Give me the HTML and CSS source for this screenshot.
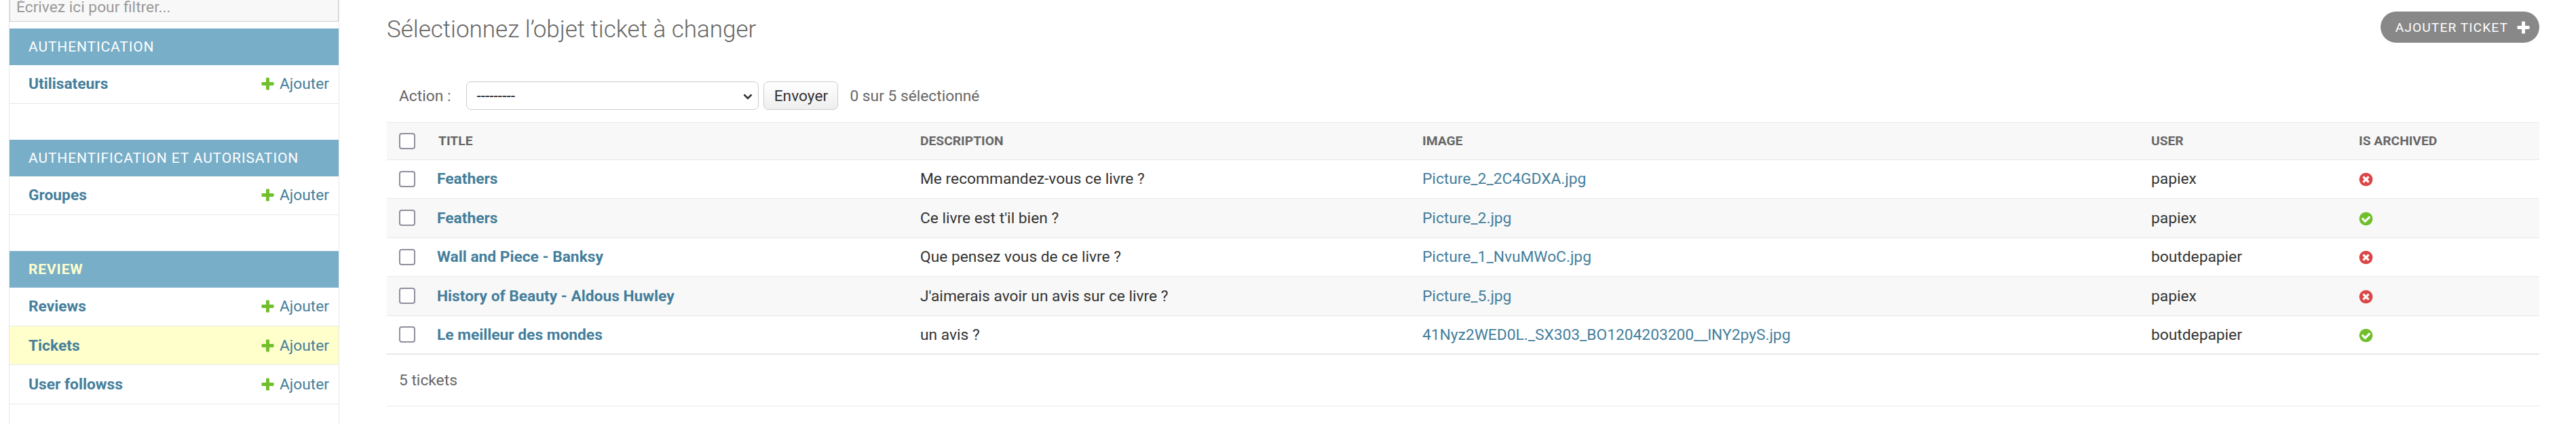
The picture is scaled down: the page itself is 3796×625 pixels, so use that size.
FILE: index.html
```html
<!DOCTYPE html>
<html lang="fr">
<head>
<meta charset="utf-8">
<title>Sélectionnez l’objet ticket à changer</title>
<link rel="stylesheet" href="styles.css">
</head>
<body>
<svg class="defs" width="0" height="0" aria-hidden="true">
  <symbol id="i-plus" viewBox="0 0 1792 1792"><path d="M1600 796v192q0 40-28 68t-68 28h-416v416q0 40-28 68t-68 28h-192q-40 0-68-28t-28-68v-416h-416q-40 0-68-28t-28-68v-192q0-40 28-68t68-28h416v-416q0-40 28-68t68-28h192q40 0 68 28t28 68v416h416q40 0 68 28t28 68z"/></symbol>
  <symbol id="i-yes" viewBox="0 0 1792 1792"><path fill="#70bf2b" d="M1412 734q0-28-18-46l-91-90q-19-19-45-19t-45 19l-408 407-226-226q-19-19-45-19t-45 19l-91 90q-18 18-18 46 0 27 18 45l362 362q19 19 45 19 27 0 46-19l543-543q18-18 18-45zm252 162q0 209-103 385.500t-279.500 279.500-385.500 103-385.500-103-279.500-279.500-103-385.500 103-385.500 279.500-279.500 385.500-103 385.500 103 279.500 279.500 103 385.500z"/></symbol>
  <symbol id="i-no" viewBox="0 0 1792 1792"><path fill="#dd4646" d="M1277 1122q0-26-19-45l-181-181 181-181q19-19 19-45 0-27-19-46l-90-90q-19-19-46-19-26 0-45 19l-181 181-181-181q-19-19-45-19-27 0-46 19l-90 90q-19 19-19 46 0 26 19 45l181 181-181 181q-19 19-19 45 0 27 19 46l90 90q19 19 46 19 26 0 45-19l181-181 181 181q19 19 45 19 27 0 46-19l90-90q19-19 19-46zm387-226q0 209-103 385.500t-279.500 279.500-385.500 103-385.500-103-279.500-279.500-103-385.500 103-385.500 279.500-279.500 385.500-103 385.500 103 279.500 279.500 103 385.500z"/></symbol>
</svg>
<div class="page">
  <nav class="sidebar">
    <input class="filter" type="search" placeholder="Écrivez ici pour filtrer...">
    <section class="app">
      <h2 class="app-head">Authentication</h2>
      <div class="app-row"><a class="model" href="#">Utilisateurs</a><a class="add" href="#"><svg class="plus"><use href="#i-plus"/></svg>Ajouter</a></div>
    </section>
    <section class="app">
      <h2 class="app-head">Authentification et autorisation</h2>
      <div class="app-row"><a class="model" href="#">Groupes</a><a class="add" href="#"><svg class="plus"><use href="#i-plus"/></svg>Ajouter</a></div>
    </section>
    <section class="app">
      <h2 class="app-head current">Review</h2>
      <div class="app-row"><a class="model" href="#">Reviews</a><a class="add" href="#"><svg class="plus"><use href="#i-plus"/></svg>Ajouter</a></div>
      <div class="app-row selected"><a class="model" href="#">Tickets</a><a class="add" href="#"><svg class="plus"><use href="#i-plus"/></svg>Ajouter</a></div>
      <div class="app-row"><a class="model" href="#">User followss</a><a class="add" href="#"><svg class="plus"><use href="#i-plus"/></svg>Ajouter</a></div>
    </section>
  </nav>
  <main class="content">
    <header class="top">
      <h1 class="title">Sélectionnez l’objet ticket à changer</h1>
      <a class="addbtn" href="#">Ajouter ticket<svg class="addbtn-icon"><use href="#i-plus"/></svg></a>
    </header>
    <div class="actions">
      <label class="action-label">Action :</label>
      <span class="select-wrap">
        <select class="action-select"><option>---------</option></select>
        <svg class="chevron" viewBox="0 0 14 9"><path d="M1.500 1.500 7 7l5.500-5.500"/></svg>
      </span>
      <button class="go" type="button">Envoyer</button>
      <span class="counter">0 sur 5 sélectionné</span>
    </div>
    <table class="list">
      <thead>
        <tr>
          <th class="c-check"><span class="box"></span></th>
          <th class="c-title">Title</th>
          <th class="c-desc">Description</th>
          <th class="c-image">Image</th>
          <th class="c-user">User</th>
          <th class="c-arch">Is archived</th>
        </tr>
      </thead>
      <tbody>
        <tr><td class="c-check"><span class="box"></span></td><td class="c-title"><a class="name" href="#">Feathers</a></td><td>Me recommandez-vous ce livre ?</td><td><a class="file" href="#">Picture_2_2C4GDXA.jpg</a></td><td>papiex</td><td class="c-arch"><svg class="state"><use href="#i-no"/></svg></td></tr>
        <tr class="alt"><td class="c-check"><span class="box"></span></td><td class="c-title"><a class="name" href="#">Feathers</a></td><td>Ce livre est t'il bien ?</td><td><a class="file" href="#">Picture_2.jpg</a></td><td>papiex</td><td class="c-arch"><svg class="state"><use href="#i-yes"/></svg></td></tr>
        <tr><td class="c-check"><span class="box"></span></td><td class="c-title"><a class="name" href="#">Wall and Piece - Banksy</a></td><td>Que pensez vous de ce livre ?</td><td><a class="file" href="#">Picture_1_NvuMWoC.jpg</a></td><td>boutdepapier</td><td class="c-arch"><svg class="state"><use href="#i-no"/></svg></td></tr>
        <tr class="alt"><td class="c-check"><span class="box"></span></td><td class="c-title"><a class="name" href="#">History of Beauty - Aldous Huwley</a></td><td>J'aimerais avoir un avis sur ce livre ?</td><td><a class="file" href="#">Picture_5.jpg</a></td><td>papiex</td><td class="c-arch"><svg class="state"><use href="#i-no"/></svg></td></tr>
        <tr class="last"><td class="c-check"><span class="box"></span></td><td class="c-title"><a class="name" href="#">Le meilleur des mondes</a></td><td>un avis ?</td><td><a class="file" href="#">41Nyz2WED0L._SX303_BO1204203200__lNY2pyS.jpg</a></td><td>boutdepapier</td><td class="c-arch"><svg class="state"><use href="#i-yes"/></svg></td></tr>
      </tbody>
    </table>
    <p class="paginator">5 tickets</p>
  </main>
</div>
</body>
</html>
```
FILE: styles.css
```css
* { box-sizing: border-box; }
html, body { margin: 0; height: 625px; overflow: hidden; background: #fff; }
body { font-family: Roboto, "Liberation Sans", sans-serif; font-size: 22.75px; color: #333; }
.defs { position: absolute; }
.page { display: flex; height: 625px; padding-left: 13px; }
a { text-decoration: none; color: #447e9b; }

.sidebar { width: 487px; flex: none; height: 625px; border-left: 1px solid #e8e8e8; border-right: 1px solid #e8e8e8; }
.filter { display: block; width: 100%; height: 42px; margin: -10px 0 10px; padding: 0 9px; border: 1px solid #ccc; border-top: 0; border-radius: 0; background: #f8f8f8; font: 400 22.75px Roboto, sans-serif; color: #333; outline: none; appearance: none; }
.filter::placeholder { color: #999; opacity: 1; }
.app { margin-bottom: 53px; }
.app-head { margin: 0; height: 53.6px; padding: 0 28px; display: flex; align-items: center; background: #79aec8; color: #fff; font-size: 21px; font-weight: 400; letter-spacing: .875px; text-transform: uppercase; }
.app-head.current { color: #ffc; font-weight: 700; }
.app-row { display: flex; justify-content: space-between; align-items: center; height: 57.4px; padding: 0 14px 0 28px; border-bottom: 1px solid #e8e8e8; }
.app-row.selected { background: #ffc; }
.model { font-weight: 700; }
.add { display: flex; align-items: center; }
.plus { width: 23px; height: 23px; margin-right: 6px; fill: #70bf2b; }

.content { flex: 1; min-width: 0; margin: 0 54px 0 70px; }
.top { display: flex; justify-content: space-between; height: 120px; }
.title { margin: 19px 0 0; font-size: 35px; line-height: 50px; font-weight: 300; color: #666; }
.addbtn { display: flex; align-items: center; height: 46px; margin-top: 17px; padding: 0 12px 0 22px; border-radius: 23px; background: #888; color: #fff; font-size: 19.25px; letter-spacing: 1.05px; text-transform: uppercase; }
.addbtn-icon { width: 23px; height: 23px; margin-left: 11px; fill: #fff; }

.actions { display: flex; align-items: center; height: 42px; padding-left: 18px; margin-bottom: 18px; color: #666; }
.action-label { margin-right: 23px; }
.select-wrap { position: relative; display: block; width: 431px; height: 42px; }
.action-select { display: block; width: 100%; height: 42px; padding: 0 14px; border: 1px solid #ccc; border-radius: 7px; background: #fff; color: #111; font: 400 22.75px Roboto, sans-serif; appearance: none; }
.chevron { position: absolute; top: 18px; right: 9px; width: 14px; height: 9px; fill: none; stroke: #333; stroke-width: 2.6; pointer-events: none; }
.go { height: 42px; width: 110px; margin-left: 7px; padding: 0; border: 1px solid #ccc; border-radius: 7px; background: linear-gradient(#fff, #eee); color: #333; font: 400 22.75px Roboto, sans-serif; }
.counter { margin-left: 17px; }

.list { width: 3172px; table-layout: fixed; border-collapse: separate; border-spacing: 0; }
.list th { height: 55.5px; padding: 0; background: #f8f8f8; border-top: 1px solid #e8e8e8; border-bottom: 1px solid #e8e8e8; color: #666; font-size: 19.25px; font-weight: 700; text-align: left; text-transform: uppercase; }
.list td { height: 57.5px; padding: 0; border-bottom: 1px solid #e8e8e8; }
.list tr.alt td { background: #f8f8f8; }
.list tr.last td { border-bottom-width: 2px; }
.c-check { width: 74px; padding-left: 18px !important; }
.c-title { width: 712px; }
th.c-title { padding-left: 2px !important; }
.c-desc { width: 740px; }
.c-image { width: 1074px; }
.c-user { width: 306px; }
.box { display: block; width: 24px; height: 24px; border: 2.500px solid #8f8f9d; border-radius: 4px; background: #fff; }
.name { font-weight: 700; }
.state { display: block; width: 23px; height: 23px; margin-left: -1px; margin-top: 2px; }
.paginator { margin: 0; height: 76px; line-height: 76px; padding-left: 18px; border-bottom: 1px solid #e8e8e8; color: #666; }
```
